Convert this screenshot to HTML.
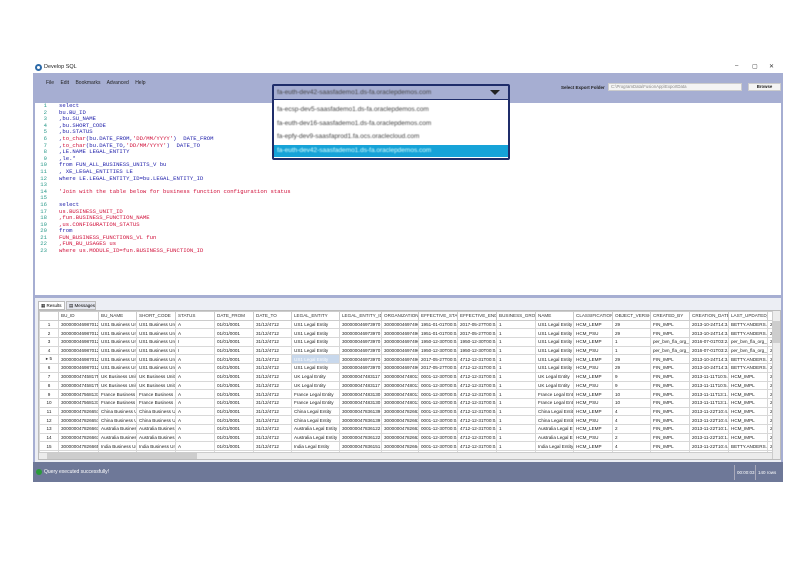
<!DOCTYPE html>
<html><head><meta charset="utf-8"><style>
*{margin:0;padding:0;box-sizing:border-box}
body{width:810px;height:565px;background:#fff;position:relative;overflow:hidden;font-family:"Liberation Sans",sans-serif}
.a{position:absolute}
.code{font-family:"Liberation Mono",monospace;font-size:5.6px;line-height:6.6px;white-space:pre}
.ln{color:#2a9a8a;text-align:right;width:10px}
.b{color:#1a1aa8}.r{color:#d0103a}
table{border-collapse:collapse;font-size:4.6px;color:#222;table-layout:fixed}
td{border:1px solid #d8d8d8;height:8.7px;padding:0 2px;white-space:nowrap;overflow:hidden}
tr.h td{background:#fff;color:#333;border-color:#ccc}
td.n{text-align:center;background:#fff}
</style></head><body>
<div class="a" style="left:30px;top:62px;width:753px;height:11px;background:#fff"></div>
<div class="a" style="left:35px;top:64px;width:7px;height:7px;border-radius:50%;border:2px solid #2d6aa8"></div>
<div class="a" style="left:44px;top:64px;font-size:5.5px;color:#222">Develop SQL</div>
<div class="a" style="left:735px;top:63px;font-size:6px;color:#333">–</div>
<div class="a" style="left:752px;top:63px;font-size:6px;color:#333">▢</div>
<div class="a" style="left:769px;top:63px;font-size:6px;color:#333">✕</div>
<div class="a" style="left:33px;top:73px;width:750px;height:409px;background:#a6aed2"></div>
<div class="a" style="left:46px;top:80px;font-size:5px;color:#222;word-spacing:5px">File Edit Bookmarks Advanced Help</div>
<div class="a" style="left:35px;top:103px;width:746px;height:192px;background:#fff"></div>
<div class="a code ln" style="left:37px;top:103px">1
2
3
4
5
6
7
8
9
10
11
12
13
14
15
16
17
18
19
20
21
22
23</div>
<div class="a code" style="left:59px;top:103px"><span class="b">select
bu.BU_ID
,bu.SU_NAME
,bu.SHORT_CODE
,bu.STATUS
,<span class="r">to_char</span>(bu.DATE_FROM,<span class="r">'DD/MM/YYYY'</span>)  DATE_FROM
,<span class="r">to_char</span>(bu.DATE_TO,<span class="r">'DD/MM/YYYY'</span>)  DATE_TO
,LE.NAME LEGAL_ENTITY
,le.*
from FUN_ALL_BUSINESS_UNITS_V bu
, XE_LEGAL_ENTITIES LE
where LE.LEGAL_ENTITY_ID=bu.LEGAL_ENTITY_ID</span>

<span class="r">'Join with the table below for business function configuration status</span>

<span class="b">select</span>
<span class="r">us.BUSINESS_UNIT_ID
,fun.BUSINESS_FUNCTION_NAME
,us.CONFIGURATION_STATUS</span>
<span class="b">from</span>
<span class="r">FUN_BUSINESS_FUNCTIONS_VL fun
,FUN_BU_USAGES us
where us.MODULE_ID=fun.BUSINESS_FUNCTION_ID</span></div>
<div class="a" style="left:272px;top:84px;width:238px;height:76px;background:#fff;border:2px solid #1f2d6a;border-radius:2px"></div>
<div class="a" style="left:274px;top:86px;width:234px;height:14px;background:#a6aed2;border-bottom:1px solid #1f2d6a"></div>
<div class="a" style="left:277px;top:89px;font-size:6.5px;color:#444;filter:blur(0.5px)">fa-euth-dev42-saasfademo1.ds-fa.oraclepdemos.com</div>
<div class="a" style="left:490px;top:90px;width:0;height:0;border-left:5px solid transparent;border-right:5px solid transparent;border-top:5px solid #222"></div>
<div class="a" style="left:277px;top:103px;font-size:6.5px;color:#444;line-height:13.5px;filter:blur(0.5px)">fa-ecsp-dev5-saasfademo1.ds-fa.oraclepdemos.com<br>fa-euth-dev16-saasfademo1.ds-fa.oraclepdemos.com<br>fa-epfy-dev9-saasfaprod1.fa.ocs.oraclecloud.com</div>
<div class="a" style="left:274px;top:145px;width:234px;height:12px;background:#16a3d8"></div>
<div class="a" style="left:277px;top:147px;font-size:6.5px;color:#dff;filter:blur(0.5px)">fa-euth-dev42-saasfademo1.ds-fa.oraclepdemos.com</div>
<div class="a" style="left:561px;top:85px;font-size:4.5px;font-weight:bold;color:#222">Select Export Folder</div>
<div class="a" style="left:608px;top:83px;width:134px;height:8px;background:#f4f4f4;border:1px solid #ccc;font-size:4.3px;color:#888;padding-left:2px;line-height:6px">C:\ProgramData\FusionApp\ExportData</div>
<div class="a" style="left:748px;top:83px;width:33px;height:8px;background:#f4f4f4;border:1px solid #ccc;font-size:4.3px;color:#222;text-align:center;line-height:6px;font-weight:bold">Browse</div>
<div class="a" style="left:35px;top:298px;width:746px;height:164px;background:#eceef4"></div>
<div class="a" style="left:38px;top:301px;width:27px;height:9px;background:#fff;border:1px solid #bbb;font-size:4.5px;line-height:7px;padding-left:2px">▦ Results</div>
<div class="a" style="left:66px;top:301px;width:30px;height:9px;background:#e4e6ee;border:1px solid #bbb;font-size:4.5px;line-height:7px;padding-left:2px">▤ Messages</div>
<div class="a" style="left:38px;top:310px;width:743px;height:150px;background:#fff;border:1px solid #bbb;overflow:hidden">
<table style="width:733px">
<colgroup><col style="width:19px"><col style="width:40px"><col style="width:38px"><col style="width:39px"><col style="width:39px"><col style="width:39px"><col style="width:38px"><col style="width:48px"><col style="width:42px"><col style="width:37px"><col style="width:39px"><col style="width:39px"><col style="width:39px"><col style="width:38px"><col style="width:39px"><col style="width:38px"><col style="width:39px"><col style="width:39px"><col style="width:39px"><col style="width:38px"><col style="width:8px"></colgroup>
<tr class="h"><td></td><td>BU_ID</td><td>BU_NAME</td><td>SHORT_CODE</td><td>STATUS</td><td>DATE_FROM</td><td>DATE_TO</td><td>LEGAL_ENTITY</td><td>LEGAL_ENTITY_ID</td><td>ORGANIZATION_I</td><td>EFFECTIVE_STAR</td><td>EFFECTIVE_END_</td><td>BUSINESS_GROU</td><td>NAME</td><td>CLASSIFICATION_</td><td>OBJECT_VERSION</td><td>CREATED_BY</td><td>CREATION_DATE</td><td>LAST_UPDATED_</td><td></td></tr>
<tr><td class="n">1</td><td>300000046987012</td><td>US1 Business Unit</td><td>US1 Business Unit</td><td>A</td><td>01/01/0001</td><td>31/12/4712</td><td>US1 Legal Entity</td><td>300000046973970</td><td>300000046974965</td><td>1951-01-01T00:0..</td><td>2017-05-27T00:0..</td><td>1</td><td>US1 Legal Entity</td><td>HCM_LEMP</td><td>29</td><td>FIN_IMPL</td><td>2013-10-24T14:3..</td><td>BETTY.ANDERS..</td><td>2</td></tr>
<tr><td class="n">2</td><td>300000046987012</td><td>US1 Business Unit</td><td>US1 Business Unit</td><td>A</td><td>01/01/0001</td><td>31/12/4712</td><td>US1 Legal Entity</td><td>300000046973970</td><td>300000046974965</td><td>1951-01-01T00:0..</td><td>2017-05-27T00:0..</td><td>1</td><td>US1 Legal Entity</td><td>HCM_PSU</td><td>29</td><td>FIN_IMPL</td><td>2013-10-24T14:3..</td><td>BETTY.ANDERS..</td><td>2</td></tr>
<tr><td class="n">3</td><td>300000046987012</td><td>US1 Business Unit</td><td>US1 Business Unit</td><td>I</td><td>01/01/0001</td><td>31/12/4712</td><td>US1 Legal Entity</td><td>300000046973970</td><td>300000046974965</td><td>1950-12-30T00:0..</td><td>1950-12-30T00:0..</td><td>1</td><td>US1 Legal Entity</td><td>HCM_LEMP</td><td>1</td><td>per_bvn_fla_org_l..</td><td>2016-07-01T03:2..</td><td>per_bvn_fla_org_l..</td><td>2</td></tr>
<tr><td class="n">4</td><td>300000046987012</td><td>US1 Business Unit</td><td>US1 Business Unit</td><td>I</td><td>01/01/0001</td><td>31/12/4712</td><td>US1 Legal Entity</td><td>300000046973970</td><td>300000046974965</td><td>1950-12-30T00:0..</td><td>1950-12-30T00:0..</td><td>1</td><td>US1 Legal Entity</td><td>HCM_PSU</td><td>1</td><td>per_bvn_fla_org_l..</td><td>2016-07-01T03:2..</td><td>per_bvn_fla_org_l..</td><td>2</td></tr>
<tr><td class="n">▸ 5</td><td>300000046987012</td><td>US1 Business Unit</td><td>US1 Business Unit</td><td>A</td><td>01/01/0001</td><td>31/12/4712</td><td style="background:#c8d8ec;color:#fff">US1 Legal Entity</td><td>300000046973970</td><td>300000046974965</td><td>2017-05-27T00:0..</td><td>4712-12-31T00:0..</td><td>1</td><td>US1 Legal Entity</td><td>HCM_LEMP</td><td>29</td><td>FIN_IMPL</td><td>2013-10-24T14:3..</td><td>BETTY.ANDERS..</td><td>2</td></tr>
<tr><td class="n">6</td><td>300000046987012</td><td>US1 Business Unit</td><td>US1 Business Unit</td><td>A</td><td>01/01/0001</td><td>31/12/4712</td><td>US1 Legal Entity</td><td>300000046973970</td><td>300000046974965</td><td>2017-05-27T00:0..</td><td>4712-12-31T00:0..</td><td>1</td><td>US1 Legal Entity</td><td>HCM_PSU</td><td>29</td><td>FIN_IMPL</td><td>2013-10-24T14:3..</td><td>BETTY.ANDERS..</td><td>2</td></tr>
<tr><td class="n">7</td><td>300000047458175</td><td>UK Business Unit</td><td>UK Business Unit</td><td>A</td><td>01/01/0001</td><td>31/12/4712</td><td>UK Legal Entity</td><td>300000047483117</td><td>300000047480115</td><td>0001-12-30T00:0..</td><td>4712-12-31T00:0..</td><td>1</td><td>UK Legal Entity</td><td>HCM_LEMP</td><td>9</td><td>FIN_IMPL</td><td>2013-11-11T10:5..</td><td>HCM_IMPL</td><td>2</td></tr>
<tr><td class="n">8</td><td>300000047458175</td><td>UK Business Unit</td><td>UK Business Unit</td><td>A</td><td>01/01/0001</td><td>31/12/4712</td><td>UK Legal Entity</td><td>300000047483117</td><td>300000047480115</td><td>0001-12-30T00:0..</td><td>4712-12-31T00:0..</td><td>1</td><td>UK Legal Entity</td><td>HCM_PSU</td><td>9</td><td>FIN_IMPL</td><td>2013-11-11T10:5..</td><td>HCM_IMPL</td><td>2</td></tr>
<tr><td class="n">9</td><td>300000047568131</td><td>France Business ..</td><td>France Business ..</td><td>A</td><td>01/01/0001</td><td>31/12/4712</td><td>France Legal Entity</td><td>300000047483130</td><td>300000047480132</td><td>0001-12-30T00:0..</td><td>4712-12-31T00:0..</td><td>1</td><td>France Legal Entity</td><td>HCM_LEMP</td><td>10</td><td>FIN_IMPL</td><td>2013-11-11T13:1..</td><td>HCM_IMPL</td><td>2</td></tr>
<tr><td class="n">10</td><td>300000047568131</td><td>France Business ..</td><td>France Business ..</td><td>A</td><td>01/01/0001</td><td>31/12/4712</td><td>France Legal Entity</td><td>300000047483130</td><td>300000047480132</td><td>0001-12-30T00:0..</td><td>4712-12-31T00:0..</td><td>1</td><td>France Legal Entity</td><td>HCM_PSU</td><td>10</td><td>FIN_IMPL</td><td>2013-11-11T13:1..</td><td>HCM_IMPL</td><td>2</td></tr>
<tr><td class="n">11</td><td>300000047826657</td><td>China Business U..</td><td>China Business U..</td><td>A</td><td>01/01/0001</td><td>31/12/4712</td><td>China Legal Entity</td><td>300000047836139</td><td>300000047826636</td><td>0001-12-30T00:0..</td><td>4712-12-31T00:0..</td><td>1</td><td>China Legal Entity</td><td>HCM_LEMP</td><td>4</td><td>FIN_IMPL</td><td>2013-11-22T10:4..</td><td>HCM_IMPL</td><td>2</td></tr>
<tr><td class="n">12</td><td>300000047826657</td><td>China Business U..</td><td>China Business U..</td><td>A</td><td>01/01/0001</td><td>31/12/4712</td><td>China Legal Entity</td><td>300000047836139</td><td>300000047826636</td><td>0001-12-30T00:0..</td><td>4712-12-31T00:0..</td><td>1</td><td>China Legal Entity</td><td>HCM_PSU</td><td>4</td><td>FIN_IMPL</td><td>2013-11-22T10:4..</td><td>HCM_IMPL</td><td>2</td></tr>
<tr><td class="n">13</td><td>300000047826661</td><td>Australia Busines..</td><td>Australia Busines..</td><td>A</td><td>01/01/0001</td><td>31/12/4712</td><td>Australia Legal Entity</td><td>300000047836122</td><td>300000047826629</td><td>0001-12-30T00:0..</td><td>4712-12-31T00:0..</td><td>1</td><td>Australia Legal E..</td><td>HCM_LEMP</td><td>2</td><td>FIN_IMPL</td><td>2013-11-22T10:1..</td><td>HCM_IMPL</td><td>2</td></tr>
<tr><td class="n">14</td><td>300000047826661</td><td>Australia Busines..</td><td>Australia Busines..</td><td>A</td><td>01/01/0001</td><td>31/12/4712</td><td>Australia Legal Entity</td><td>300000047836122</td><td>300000047826629</td><td>0001-12-30T00:0..</td><td>4712-12-31T00:0..</td><td>1</td><td>Australia Legal E..</td><td>HCM_PSU</td><td>2</td><td>FIN_IMPL</td><td>2013-11-22T10:1..</td><td>HCM_IMPL</td><td>2</td></tr>
<tr><td class="n">15</td><td>300000047826665</td><td>India Business Unit</td><td>India Business Unit</td><td>A</td><td>01/01/0001</td><td>31/12/4712</td><td>India Legal Entity</td><td>300000047836151</td><td>300000047826643</td><td>0001-12-30T00:0..</td><td>4712-12-31T00:0..</td><td>1</td><td>India Legal Entity</td><td>HCM_LEMP</td><td>4</td><td>FIN_IMPL</td><td>2013-11-22T10:4..</td><td>BETTY.ANDERS..</td><td>2</td></tr>
<tr><td class="n">16</td><td>300000047826665</td><td>India Business Unit</td><td>India Business Unit</td><td>A</td><td>01/01/0001</td><td>31/12/4712</td><td>India Legal Entity</td><td>300000047836151</td><td>300000047826643</td><td>0001-12-30T00:0..</td><td>4712-12-31T00:0..</td><td>1</td><td>India Legal Entity</td><td>HCM_PSU</td><td>4</td><td>FIN_IMPL</td><td>2013-11-22T10:4..</td><td>BETTY.ANDERS..</td><td>2</td></tr>
</table>
<div class="a" style="left:0;top:141px;width:733px;height:8px;background:#ececec;border-top:1px solid #ccc"></div>
<div class="a" style="left:8px;top:142px;width:150px;height:6px;background:#cdcdcd"></div>
<div class="a" style="left:733px;top:0;width:9px;height:149px;background:#ececec;border-left:1px solid #ccc"></div>
<div class="a" style="left:734px;top:10px;width:7px;height:22px;background:#cdcdcd"></div>
</div>
<div class="a" style="left:33px;top:462px;width:750px;height:20px;background:#6e7898"></div>
<div class="a" style="left:36px;top:469px;width:6px;height:6px;border-radius:50%;background:#2a9a3a"></div>
<div class="a" style="left:44px;top:469px;font-size:5px;color:#fff">Query executed successfully!</div>
<div class="a" style="left:734px;top:465px;width:1px;height:15px;background:#aab"></div>
<div class="a" style="left:737px;top:470px;font-size:4.5px;color:#fff">00:00:03</div>
<div class="a" style="left:755px;top:465px;width:1px;height:15px;background:#aab"></div>
<div class="a" style="left:758px;top:470px;font-size:4.5px;color:#fff">140 rows</div>
</body></html>
